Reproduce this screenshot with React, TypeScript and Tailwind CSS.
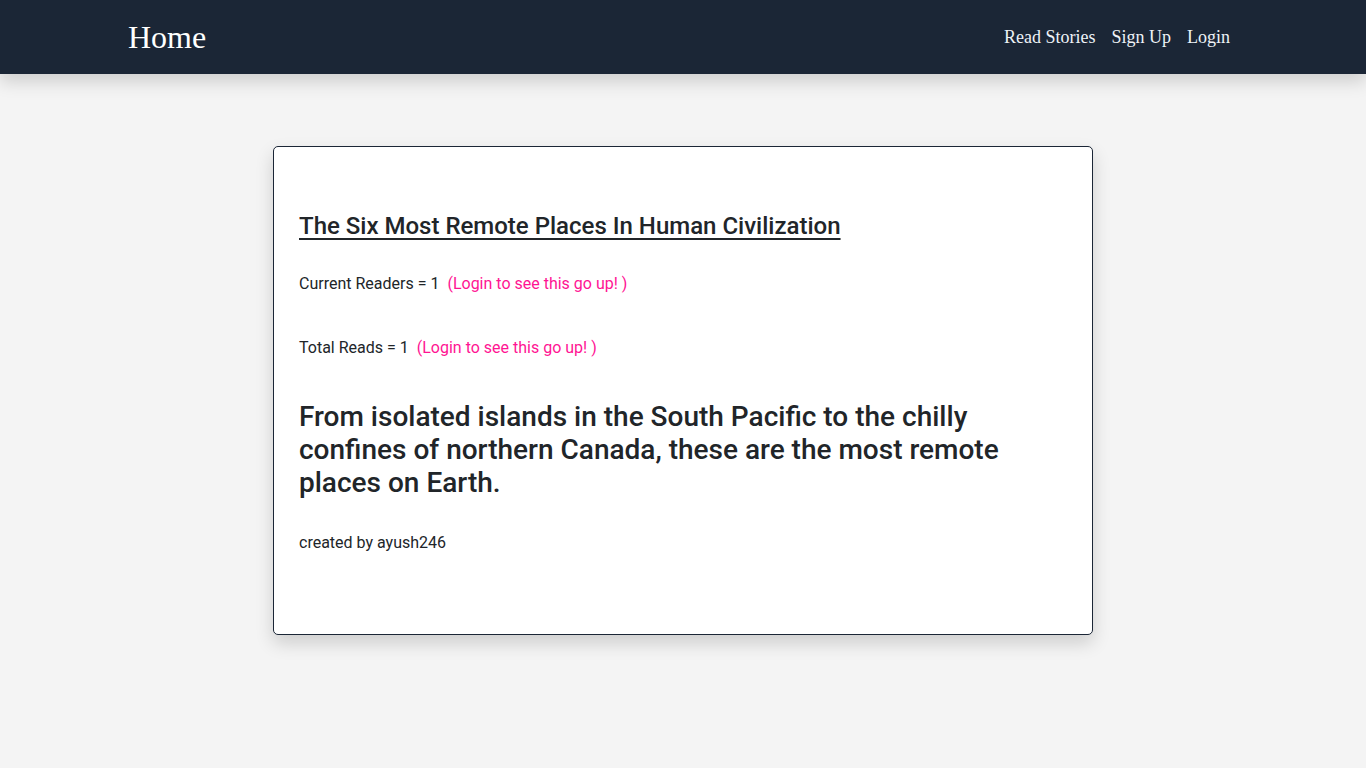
export default function App() {
  return (
    <div className="min-h-screen bg-[#f4f4f4]" style={{ fontFamily: "Roboto, sans-serif" }}>
      <nav className="h-[74px] bg-[#1b2636] shadow-[0_8px_16px_rgba(0,0,0,0.15)] relative">
        <div className="mx-auto w-[1110px] h-full flex items-center justify-between" style={{ fontFamily: '"Liberation Serif", serif' }}>
          <a className="text-[32px] text-white leading-none">Home</a>
          <div className="flex items-center text-[18px] text-[#eef2f7]">
            <a className="px-2">Read Stories</a>
            <a className="px-2">Sign Up</a>
            <a className="pl-2 pr-2">Login</a>
          </div>
        </div>
      </nav>
      <div className="flex justify-center pt-[72px]">
        <div className="w-[820px] bg-white border border-[#1b2636] rounded-[5px] shadow-[0_8px_18px_rgba(0,0,0,0.16)] px-[25px] pt-[65px] pb-[79px] text-[#212529]">
          <h4 className="text-[24px] font-medium leading-[1.2] underline underline-offset-[4px] decoration-[2px]">
            The Six Most Remote Places In Human Civilization
          </h4>
          <p className="mt-[31px] text-[16px] leading-[24px]">
            Current Readers = 1<span className="ml-[8px] text-[#ff1493]">(Login to see this go up! )</span>
          </p>
          <p className="mt-[40px] text-[16px] leading-[24px]">
            Total Reads = 1<span className="ml-[8px] text-[#ff1493]">(Login to see this go up! )</span>
          </p>
          <h3 className="mt-[40px] text-[28px] font-medium leading-[33px] w-[720px]">
            From isolated islands in the South Pacific to the chilly confines of northern Canada, these are the most remote places on Earth.
          </h3>
          <p className="mt-[32px] text-[16px] leading-[24px]">created by ayush246</p>
        </div>
      </div>
    </div>
  );
}
